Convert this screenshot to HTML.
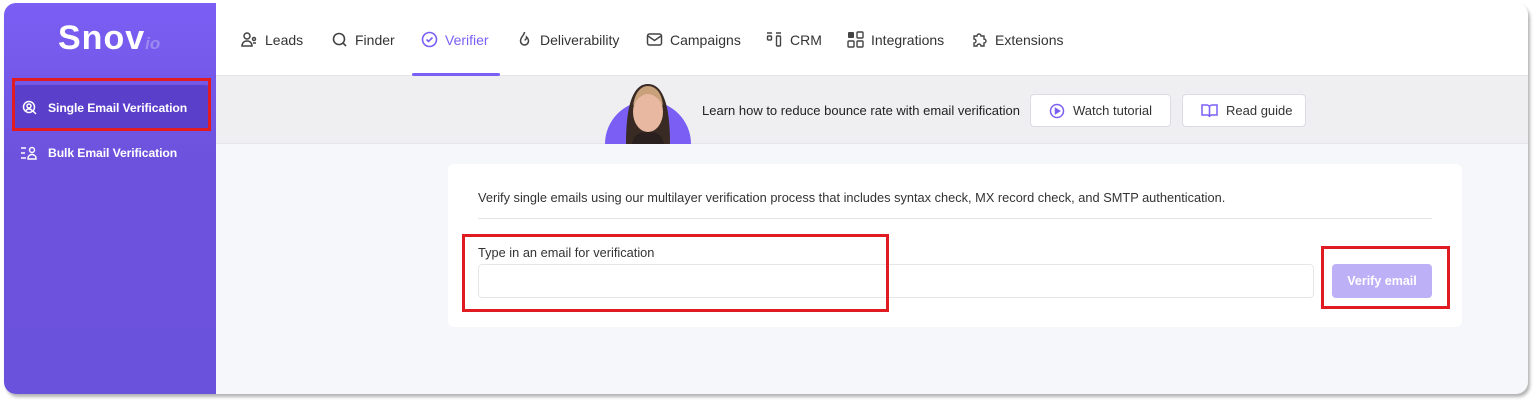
<!DOCTYPE html>
<html><head><meta charset="utf-8"><style>
*{box-sizing:border-box;margin:0;padding:0}
body{width:1536px;height:404px;background:#fff;font-family:"Liberation Sans",sans-serif;position:relative;overflow:hidden}
.frame{position:absolute;left:4px;top:3px;width:1524px;height:391px;border-radius:12px;overflow:hidden;background:#f6f7fb;box-shadow:2px 3px 3px rgba(0,0,0,.3)}
.side{position:absolute;left:0;top:0;width:212px;height:100%;background:linear-gradient(#7b5ff5,#6c52dc 40%,#6b52dc)}
.logo{position:absolute;left:54px;top:16px;color:#fff;font-weight:bold;font-size:34px;letter-spacing:1px}
.logo i{font-size:17px;color:#9b8af0;font-weight:bold;letter-spacing:0}
.hdr{position:absolute;left:212px;top:0;right:0;height:73px;background:#fff;border-bottom:1px solid #e6e6ea}
.nav{position:absolute;top:28px;font-size:14px;color:#333;display:flex;align-items:center;gap:7px}
.nav svg{width:17px;height:17px}
.ul{position:absolute;left:196px;top:70px;width:88px;height:3px;background:#7b5ff5;border-radius:2px}
.banner{position:absolute;left:212px;top:73px;right:0;height:68px;background:#efeff1;border-bottom:1px solid #e6e6ea}
.btn{position:absolute;top:18px;height:33px;background:#fff;border:1px solid #dcdce4;border-radius:4px;font-size:13px;color:#333;display:flex;align-items:center;padding-left:18px;gap:8px}
.sel{position:absolute;left:8px;top:82px;width:199px;height:46px;background:#5a3fcb;border-radius:6px}
.red{position:absolute;border:3px solid #e01b22}
.si{position:absolute;color:#fff;font-weight:bold;font-size:12.2px;display:flex;align-items:center;gap:10px;letter-spacing:-0.1px}
.card{position:absolute;left:444px;top:161px;width:1014px;height:163px;background:#fff;border-radius:6px}
</style></head><body>
<div class="frame">
<div class="side">
<div class="logo">Snov<i>io</i></div>
<div class="sel"></div>
<div class="si" style="left:18px;top:97px"><svg width="16" height="16" viewBox="0 0 16 16" fill="none" stroke="#fff" stroke-width="1.5"><circle cx="7" cy="7" r="5.5"/><circle cx="7" cy="6" r="2"/><path d="M4 10.5c1.5-2 4.5-2 6 0M11 11l3 3"/></svg>Single Email Verification</div>
<div class="si" style="left:16px;top:143px"><svg width="18" height="14" viewBox="0 0 18 14" fill="none" stroke="#fff" stroke-width="1.4"><path d="M1 2h5M1 7h4M1 12h5"/><circle cx="12" cy="4" r="2.5"/><path d="M8 13v-1c0-2 2-3.5 4-3.5s4 1.5 4 3.5v1z"/></svg>Bulk Email Verification</div>
</div>
<div class="hdr">
<div class="nav" style="left:25px"><svg viewBox="0 0 17 17" fill="none" stroke="#444" stroke-width="1.5"><circle cx="6" cy="5" r="3"/><path d="M1 15c0-3 2-5 5-5s5 2 5 5z"/><circle cx="13" cy="8" r="1.5"/><path d="M12 12h3"/></svg>Leads</div>
<div class="nav" style="left:115px"><svg viewBox="0 0 17 17" fill="none" stroke="#444" stroke-width="1.6"><circle cx="8" cy="8" r="5.5"/><path d="M12 12l3 3"/></svg>Finder</div>
<div class="nav" style="left:205px;color:#7b5ff5"><svg viewBox="0 0 17 17" fill="none" stroke="#7b5ff5" stroke-width="1.6"><circle cx="8.5" cy="8.5" r="7"/><path d="M5.5 8.5l2 2 4-4"/></svg>Verifier</div>
<div class="nav" style="left:300px"><svg viewBox="0 0 17 17" fill="none" stroke="#444" stroke-width="1.5"><path d="M8.5 1c0 3-4 5-4 9a4 4 0 008 0c0-2-1-3-2-4 0 2-1 3-2 3"/></svg>Deliverability</div>
<div class="nav" style="left:430px"><svg viewBox="0 0 17 17" fill="none" stroke="#444" stroke-width="1.5"><rect x="1.5" y="3" width="14" height="11" rx="2"/><path d="M2 5l6.5 4.5L15 5"/></svg>Campaigns</div>
<div class="nav" style="left:550px"><svg viewBox="0 0 17 17" fill="none" stroke="#444" stroke-width="1.4"><path d="M1 2h5M10 2h5"/><rect x="1.5" y="5" width="4" height="4" rx="1"/><rect x="10.5" y="5" width="4" height="10" rx="1"/></svg>CRM</div>
<div class="nav" style="left:631px"><svg viewBox="0 0 17 17" fill="#444"><rect x="1" y="1" width="6" height="6" rx="1"/><rect x="10" y="1" width="6" height="6" rx="1" fill="none" stroke="#444" stroke-width="1.4"/><rect x="1" y="10" width="6" height="6" rx="1" fill="none" stroke="#444" stroke-width="1.4"/><rect x="10" y="10" width="6" height="6" rx="1" fill="none" stroke="#444" stroke-width="1.4"/></svg>Integrations</div>
<div class="nav" style="left:755px"><svg viewBox="0 0 17 17" fill="none" stroke="#444" stroke-width="1.4"><path d="M3 5h3a2 2 0 114 0h3v3a2 2 0 110 4v3H10a2 2 0 10-4 0H3v-3a2 2 0 100-4z"/></svg>Extensions</div>
<div class="ul"></div>
</div>
<div class="banner">
<svg style="position:absolute;left:388px;top:0" width="88" height="68" viewBox="0 0 88 68"><circle cx="44" cy="68" r="43" fill="#7b5ff5"/><path d="M22 68c0-30 4-60 22-60s22 30 22 60z" fill="#3a2a24"/><ellipse cx="44" cy="36" rx="15" ry="20" fill="#e8b9a0"/><path d="M29 30c2-14 8-20 15-20s14 6 15 20c-4-8-10-12-15-12s-11 4-15 12z" fill="#c8a07a"/><path d="M28 68c2-10 8-12 16-12s14 2 16 12z" fill="#2a2020"/></svg>
<div style="position:absolute;left:486px;top:27px;font-size:13px;color:#222">Learn how to reduce bounce rate with email verification</div>
<div class="btn" style="left:814px;width:141px"><svg width="16" height="16" viewBox="0 0 16 16" fill="none" stroke="#7b5ff5" stroke-width="1.5"><circle cx="8" cy="8" r="6.5"/><path d="M6.5 5.5v5l4-2.5z" fill="#7b5ff5"/></svg>Watch tutorial</div>
<div class="btn" style="left:966px;width:124px"><svg width="17" height="15" viewBox="0 0 17 15" fill="none" stroke="#7b5ff5" stroke-width="1.5"><path d="M1 2h5a2.5 2.5 0 012.5 2.5V14A2 2 0 006.5 12H1zM16 2h-5a2.5 2.5 0 00-2.5 2.5V14A2 2 0 0110.5 12H16z"/></svg>Read guide</div>
</div>
<div class="card">
<div style="position:absolute;left:30px;top:26px;font-size:12.8px;color:#333">Verify single emails using our multilayer verification process that includes syntax check, MX record check, and SMTP authentication.</div>
<div style="position:absolute;left:30px;top:54px;width:954px;height:1px;background:#e4e4e8"></div>
<div style="position:absolute;left:30px;top:81px;font-size:12.8px;color:#333">Type in an email for verification</div>
<div style="position:absolute;left:30px;top:100px;width:836px;height:34px;border:1px solid #e6e6ea;border-radius:4px"></div>
<div style="position:absolute;left:884px;top:100px;width:100px;height:34px;background:#bdb0f6;border-radius:4px;color:#fff;font-weight:bold;font-size:12.5px;display:flex;align-items:center;justify-content:center">Verify email</div>
</div>
</div>
<div class="red" style="left:12px;top:78px;width:199px;height:53px"></div>
<div class="red" style="left:462px;top:234px;width:427px;height:78px"></div>
<div class="red" style="left:1321px;top:246px;width:129px;height:63px"></div>
</body></html>
